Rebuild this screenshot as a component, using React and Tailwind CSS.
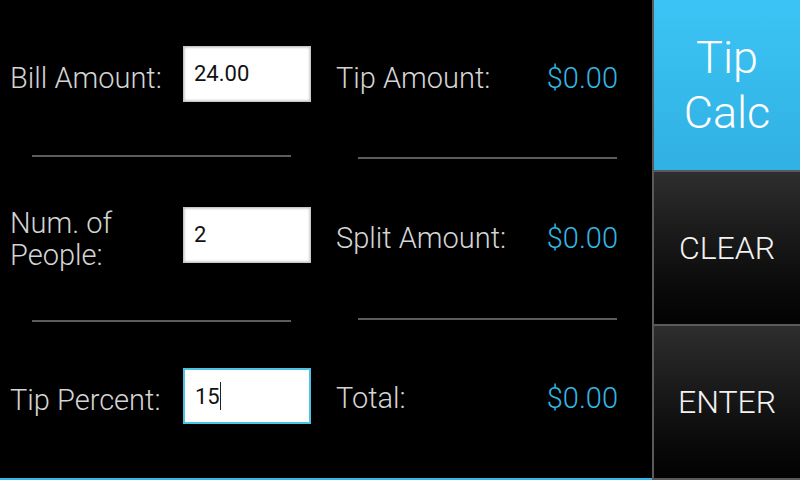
import React, { useState } from 'react';

const Field = ({ label, value, onChange, focused }) => (
  <div className="flex items-center h-full pl-[10px]">
    <div className="w-[173px] text-[29px] leading-[32px] font-light text-[#d4d4d4]">{label}</div>
    <div
      className={`w-[128px] h-[56px] mb-[8px] bg-white flex items-center pl-[10px] ${
        focused ? 'border-2 border-[#4cc2e4]' : 'border border-[#c8c8c8] shadow-[inset_0_0_3px_rgba(0,0,0,0.35)]'
      }`}
    >
      <input
        value={value}
        onChange={(e) => onChange(e.target.value)}
        className={`${focused ? 'field-sizing-content min-w-[1px]' : 'w-full'} bg-transparent outline-none text-[22px] text-[#111] caret-transparent`}
      />
      {focused && <span className="w-[1px] h-[28px] bg-[#222]" />}
    </div>
  </div>
);

const Result = ({ label, value }) => (
  <div className="flex items-center justify-between h-full pl-[10px] pr-[34px]">
    <span className="text-[29px] font-light text-[#d4d4d4]">{label}</span>
    <span className="text-[29px] font-light text-[#33b5e5]">{value}</span>
  </div>
);

const Divider = () => <div className="ml-[32px] w-[259px] h-[2px] bg-[#5c5c5c]" />;

const SideButton = ({ label, onClick }) => (
  <button
    onClick={onClick}
    className="flex-1 flex items-center justify-center bg-gradient-to-b from-[#2e2e2e] to-[#030303] text-[32px] font-light text-[#f2f2f2]"
  >
    {label}
  </button>
);

export default function App() {
  const [bill, setBill] = useState('24.00');
  const [people, setPeople] = useState('2');
  const [percent, setPercent] = useState('15');

  const clear = () => {
    setBill('');
    setPeople('');
    setPercent('');
  };

  return (
    <div className="w-[800px] h-[480px] bg-black flex overflow-hidden" style={{ fontFamily: 'Roboto, "Noto Sans", sans-serif' }}>
      {/* form + results */}
      <div className="w-[652px] h-full flex flex-col">
        <div className="flex flex-1">
          <div className="w-[326px] flex flex-col">
            <div className="h-[155px]">
              <Field label="Bill Amount:" value={bill} onChange={setBill} />
            </div>
            <Divider />
            <div className="h-[163px]">
              <Field label={<>Num. of<br />People:</>} value={people} onChange={setPeople} />
            </div>
            <Divider />
            <div className="flex-1">
              <Field label="Tip Percent:" value={percent} onChange={setPercent} focused />
            </div>
          </div>
          <div className="flex-1 flex flex-col">
            <div className="h-[157px]">
              <Result label="Tip Amount:" value="$0.00" />
            </div>
            <Divider />
            <div className="h-[159px]">
              <Result label="Split Amount:" value="$0.00" />
            </div>
            <Divider />
            <div className="flex-1">
              <Result label="Total:" value="$0.00" />
            </div>
          </div>
        </div>
        <div className="h-[2px] bg-[#33b5e5]" />
      </div>

      {/* side panel */}
      <div className="flex-1 flex flex-col border-l-2 border-[#5a5a5a] border-b-2">
        <div className="h-[170px] bg-gradient-to-b from-[#3bc4f5] to-[#31b0e3] flex items-center justify-center text-center text-[45px] leading-[55px] font-light text-white">
          Tip<br />Calc
        </div>
        <div className="h-[2px] bg-[#5a5a5a]" />
        <SideButton label="CLEAR" onClick={clear} />
        <div className="h-[2px] bg-[#5a5a5a]" />
        <SideButton label="ENTER" />
      </div>
    </div>
  );
}
